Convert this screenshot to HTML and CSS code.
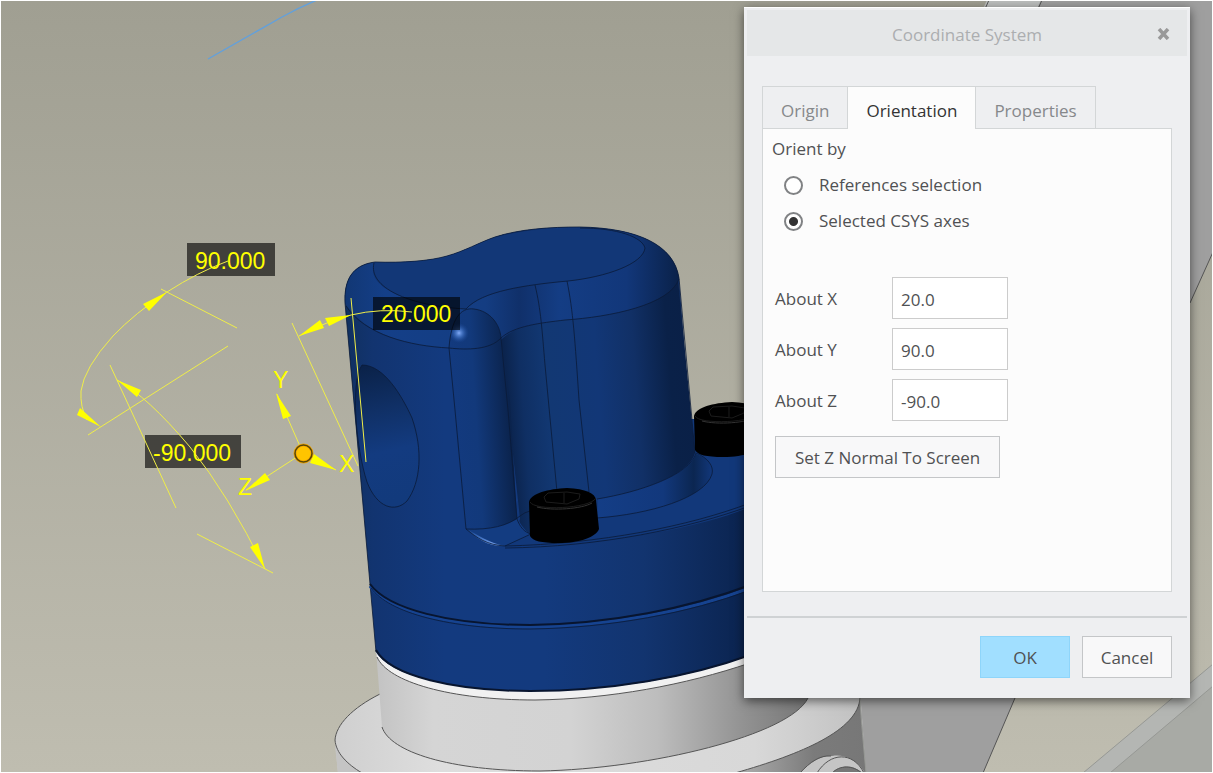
FILE: index.html
```
<!DOCTYPE html>
<html lang="en">
<head>
  <meta charset="UTF-8">
  <meta name="viewport" content="width=device-width, initial-scale=1.0">
  <title>Coordinate System</title>
  <link rel="stylesheet" href="styles.css">
</head>
<body>
  <main class="viewport">
    <svg class="scene" viewBox="1 1 1211 771" preserveAspectRatio="xMidYMid slice" role="img" aria-label="3D model">
      <defs>
        <linearGradient id="body" gradientUnits="userSpaceOnUse" x1="345" y1="0" x2="744" y2="0">
          <stop offset="0" stop-color="#10305f"/>
          <stop offset=".07" stop-color="#123470"/>
          <stop offset=".25" stop-color="#133a7f"/>
          <stop offset=".5" stop-color="#133a7e"/>
          <stop offset=".75" stop-color="#12346f"/>
          <stop offset="1" stop-color="#0b2450"/>
        </linearGradient>
        <linearGradient id="column" gradientUnits="userSpaceOnUse" x1="500" y1="350" x2="690" y2="336">
          <stop offset="0" stop-color="#0a2148"/>
          <stop offset=".1" stop-color="#0f2f63"/>
          <stop offset=".24" stop-color="#123873"/>
          <stop offset=".5" stop-color="#123777"/>
          <stop offset=".7" stop-color="#113066"/>
          <stop offset=".88" stop-color="#0a2148"/>
          <stop offset="1" stop-color="#0a2047"/>
        </linearGradient>
        <linearGradient id="lobe" gradientUnits="userSpaceOnUse" x1="450" y1="400" x2="512" y2="396">
          <stop offset="0" stop-color="#133a7f"/>
          <stop offset=".4" stop-color="#12397b"/>
          <stop offset="1" stop-color="#0a2148"/>
        </linearGradient>
        <linearGradient id="rim" gradientUnits="userSpaceOnUse" x1="345" y1="0" x2="680" y2="0">
          <stop offset="0" stop-color="#123774"/>
          <stop offset=".12" stop-color="#143f88"/>
          <stop offset=".42" stop-color="#143d82"/>
          <stop offset=".52" stop-color="#10306a"/>
          <stop offset=".64" stop-color="#143d84"/>
          <stop offset=".84" stop-color="#12377a"/>
          <stop offset="1" stop-color="#0a2148"/>
        </linearGradient>
        <linearGradient id="hole" x1="0" y1="0" x2=".1" y2="1">
          <stop offset="0" stop-color="#0a2147"/>
          <stop offset=".35" stop-color="#103066"/>
          <stop offset=".65" stop-color="#133b80"/>
          <stop offset="1" stop-color="#123a7c"/>
        </linearGradient>
        <linearGradient id="fillet" gradientUnits="userSpaceOnUse" x1="590" y1="0" x2="712" y2="0">
          <stop offset="0" stop-color="#143e87"/>
          <stop offset=".6" stop-color="#12387c"/>
          <stop offset=".85" stop-color="#0b2651"/>
          <stop offset="1" stop-color="#12377a"/>
        </linearGradient>
        <linearGradient id="glint" gradientUnits="userSpaceOnUse" x1="466" y1="529" x2="506" y2="547">
          <stop offset="0" stop-color="#133c81"/>
          <stop offset=".35" stop-color="#3b6cbc"/>
          <stop offset=".7" stop-color="#6f9be6"/>
          <stop offset="1" stop-color="#1b478f"/>
        </linearGradient>
        <linearGradient id="steel" gradientUnits="userSpaceOnUse" x1="377" y1="0" x2="808" y2="0">
          <stop offset="0" stop-color="#c3c3c3"/>
          <stop offset=".13" stop-color="#d5d5d5"/>
          <stop offset=".45" stop-color="#d3d3d3"/>
          <stop offset=".65" stop-color="#bdbdbd"/>
          <stop offset=".85" stop-color="#929292"/>
          <stop offset="1" stop-color="#777"/>
        </linearGradient>
        <linearGradient id="flange" gradientUnits="userSpaceOnUse" x1="335" y1="0" x2="860" y2="0">
          <stop offset="0" stop-color="#cfcfcf"/>
          <stop offset=".2" stop-color="#dedede"/>
          <stop offset=".8" stop-color="#d8d8d8"/>
          <stop offset="1" stop-color="#c2c2c2"/>
        </linearGradient>
        <linearGradient id="wall" gradientUnits="userSpaceOnUse" x1="735" y1="0" x2="866" y2="0">
          <stop offset="0" stop-color="#b0b0b0"/>
          <stop offset=".6" stop-color="#7b7b7b"/>
          <stop offset="1" stop-color="#777"/>
        </linearGradient>
        <radialGradient id="shine">
          <stop offset="0" stop-color="#82abf8"/>
          <stop offset=".4" stop-color="#4a7ccf" stop-opacity=".7"/>
          <stop offset="1" stop-color="#1b4a9c" stop-opacity="0"/>
        </radialGradient>
      </defs>

      <!-- background planes -->
      <path d="M987 0H1213V252L1190 303L1015 698L983 773H820V690Z" fill="#9f9f9f"/>
      <path d="M987 0H1041L1030 24H976Z" fill="#bdbfbe"/>
      <path d="M1083 773L1213 664V773Z" fill="#b4b6b3"/>
      <path d="M1110 773L1213 686V773Z" fill="#a8aaa5"/>
      <path class="edge-soft" d="M1083 773L1213 664M1110 773L1213 686"/>
      <path class="edge" d="M989 0L985 9M1042 0L1038 9M1213 252L1190 303M1015 698L983 773"/>
      <path class="sketch" d="M208 59L282 17Q298 8 317 0"/>

      <!-- steel base -->
      <path d="M335 740C336 725 352 708 380 694L700 680L860 690L866 773H338Z" fill="url(#flange)"/>
      <path d="M335 746C340 757 349 765 362 773H338Z" fill="#c4c4c4"/>
      <path d="M735 773C802 754 858 730 860 698L866 773Z" fill="url(#wall)"/>
      <path class="edge" d="M380 694C352 708 336 725 335 740C336 753 347 764 362 773M735 773C802 754 858 730 860 698"/>
      <path class="edge-soft" d="M860 698C861 720 864 750 866 773"/>
      <path d="M800 773C810 762 822 755 832 756C848 753 860 764 865 773Z" fill="#c5c5c5"/>
      <path d="M832 773C838 766 852 763 862 773Z" fill="#777"/>
      <path class="edge" d="M800 773C810 762 820 755 831 756M817 773C830 752 853 751 864 773M832 773C840 765 852 765 862 773"/>
      <path d="M376 650L382 727C390 752 450 771 540 771C650 769 790 735 808 698V640Z" fill="url(#steel)"/>
      <path class="edge" d="M382 727C390 752 450 771 540 771C650 769 790 735 808 698"/>
      <path d="M376 648L377 657C388 682 450 700 535 700C610 699 685 685 750 663V645Z" fill="#f1f1f1"/>
      <path class="edge" d="M377 657C388 682 450 700 535 700C610 699 685 685 750 663"/>

      <!-- blue housing -->
      <path d="M345 303C344 280 352 265 375 262C402 263 430 261 447 256C465 251 478 243 495 237C520 229 550 227 580 227C638 228 674 245 679 278L690 419H750V655C690 678 610 691 530 691C455 691 390 676 376 652L370 584Z" fill="url(#body)"/>
      <path d="M692 419H750V507C700 528 610 545 505 547L466 529L520 500L600 500Z" fill="#12387a"/>
      <path d="M500 335C520 320 630 318 678 280L695 453C690 475 640 492 598 499L560 540C530 540 516 526 520 519Z" fill="url(#column)"/>
      <path d="M345 303C344 280 352 265 375 262C402 263 430 261 447 256C465 251 478 243 495 237C520 229 550 227 580 227C638 228 674 245 679 278C670 305 610 317 565 320C540 323 514 326 501 340C490 350 467 350 449 348C410 346 365 335 345 303Z" fill="url(#rim)"/>
      <path d="M374 263C402 263 430 262 447 257C465 252 478 244 495 238C520 230 550 228 580 228C618 228 642 237 645 248C643 264 606 277 568 281C525 285 482 291 466 309C440 308 376 297 373 272Z" fill="#123777"/>
      <path d="M449 348C451 320 460 307 474 309C490 311 500 324 501 338L510 400L517 519C502 528 480 530 466 529L455 410Z" fill="url(#lobe)"/>
      <path d="M466 529C486 530 505 526 518 519C522 528 530 534 530 535L505 547C486 545 476 537 466 529Z" fill="#133c81"/>
      <path d="M466 529C477 534 488 543 505 546C487 547 477 538 466 529Z" fill="url(#glint)"/>
      <path d="M598 499C640 492 690 475 696 454C708 458 714 466 712 474C705 498 650 514 598 518Z" fill="url(#fillet)"/>
      <circle cx="459" cy="333" r="10" fill="url(#shine)"/>
      <path d="M362 365C384 365 402 396 412 418C423 450 421 482 407 501C395 513 377 508 367 482C356 448 350 382 362 365Z" fill="url(#hole)"/>

      <path class="edge-blue" d="M345 303C344 280 352 265 375 262C402 263 430 261 447 256C465 251 478 243 495 237C520 229 550 227 580 227C638 228 674 245 679 278L695 453"/>
      <path class="edge-blue" d="M345 303L356 425L370 584L376 652"/>
      <path class="edge-blue" d="M374 263C368 287 408 306 466 309C482 291 525 285 568 281C606 277 643 264 645 248C642 237 618 228 580 228"/>
      <path class="edge-blue" d="M346 306C365 335 410 346 449 348C467 350 490 350 501 338C514 326 540 323 565 320C610 317 670 305 679 279"/>
      <path class="edge-blue" d="M449 348C451 320 460 307 474 309C490 311 500 324 501 338L508 410L517 519C520 527 524 532 531 534M449 348L455 410L466 529"/>
      <path class="edge-blue" d="M535 285C541 310 542 330 545 365L557 492M567 281C573 310 575 340 579 400L589 492"/>
      <path class="edge-blue" d="M362 365C384 365 402 396 412 418C423 450 421 482 407 501C395 513 377 508 367 482C356 448 350 382 362 365Z"/>
      <path class="edge-blue" d="M466 529C490 530 508 526 520 516Q525 512 530 511M466 529C477 538 487 545 505 546L531 534M505 548C600 547 690 528 750 506M505 546C600 544 690 526 750 503"/>
      <path class="edge-blue" d="M597 499C640 492 690 475 696 453C708 458 714 466 712 474C705 498 650 514 597 518"/>
      <path d="M370 586C388 611 450 627 530 627C610 626 690 611 750 588" fill="none" stroke="#164390" stroke-width="3"/>
      <path class="edge-bold" d="M370 584C388 609 450 625 530 625C610 624 690 608 750 585"/>
      <path class="edge-blue" d="M371 588C389 613 450 629 530 629C610 628 690 613 750 590"/>
      <path class="edge-bold" d="M376 650C390 676 455 691 530 691C610 691 690 677 750 655"/>

      <!-- cap screws -->
      <g id="screw">
        <path d="M529 502C531 493 548 489 567 488C586 489 595 493 596 500L599 529C596 537 580 543 558 543C541 543 533 541 530 536Z"/>
        <path class="screw-edge" d="M530 502C534 511 590 509 596 498M544 497L548 493L567 492L580 494L579 499L567 504L546 502ZM564 493V503"/>
        <path d="M537 507C552 511 582 509 592 503" fill="none" stroke="#333"/>
      </g>
      <use href="#screw" x="165" y="-86"/>

      <!-- angle dimensions -->
      <g class="tag">
        <rect x="187" y="243" width="88" height="33"/>
        <rect x="145" y="435" width="96" height="33"/>
        <rect x="373" y="297" width="87" height="33"/>
      </g>
      <g class="dim">
        <path d="M228 261Q198 272 167 292Q135 313 113 336Q84 368 81 391Q80 407 87 420"/>
        <path d="M161 289L237 328M228 346L88 435M110 365L176 508M197 534L273 573"/>
        <path d="M117 380Q147 396 190 447Q228 494 265 569"/>
        <path d="M292 323L358 466M299 336Q325 322 351 315Q380 308 412 312M351 298L366 462"/>
        <path d="M303 453L277 394M303 453L246 490M303 453L336 470"/>
      </g>
      <g class="arrow">
        <path d="M167 292L143 304L149 311ZM101 427L80 408L77 415ZM117 380L141 390L137 397ZM265 569L250 547L258 543ZM299 336L320 320L324 328ZM351 315L325 318L329 326ZM276 393L283 419L291 416ZM245 491L265 473L270 480ZM336 470L310 463L314 454Z"/>
      </g>
      <circle cx="303.5" cy="453.5" r="8.5" fill="#ffc400" stroke="#f2a500" stroke-width="3"/>
      <circle cx="303.5" cy="453.5" r="8.5" fill="none" stroke="#55460a" stroke-width="1.5"/>
      <g class="dim-text">
        <text x="195" y="269">90.000</text>
        <text x="153" y="461">-90.000</text>
        <text x="381" y="322">20.000</text>
        <text x="273" y="388">Y</text>
        <text x="339" y="472">X</text>
        <text x="238" y="495">Z</text>
      </g>
    </svg>

    <form class="dialog" role="dialog" aria-labelledby="dialogTitle">
      <header class="dialog-header">
        <h1 id="dialogTitle">Coordinate System</h1>
        <button type="button" class="close" aria-label="Close">
          <svg width="13" height="12" viewBox="0 0 13 12"><path d="M2 1L11 11M11 1L2 11" stroke="#999" stroke-width="3.5"/></svg>
        </button>
      </header>

      <div class="dialog-body">
        <div class="tabs" role="tablist">
          <button type="button" class="tab" role="tab">Origin</button>
          <button type="button" class="tab active" role="tab" aria-selected="true">Orientation</button>
          <button type="button" class="tab" role="tab">Properties</button>
        </div>
        <div class="panel" role="tabpanel">
          <fieldset class="orient">
            <legend>Orient by</legend>
            <label class="radio"><input type="radio" name="orient">References selection</label>
            <label class="radio"><input type="radio" name="orient" checked>Selected CSYS axes</label>
          </fieldset>
          <div class="angles">
            <label for="aboutX">About X</label>
            <input id="aboutX" type="text" value="20.0">
            <label for="aboutY">About Y</label>
            <input id="aboutY" type="text" value="90.0">
            <label for="aboutZ">About Z</label>
            <input id="aboutZ" type="text" value="-90.0">
          </div>
          <button type="button" class="btn">Set Z Normal To Screen</button>
        </div>
      </div>

      <footer class="dialog-footer">
        <button type="submit" class="btn primary">OK</button>
        <button type="button" class="btn">Cancel</button>
      </footer>
    </form>
  </main>
</body>
</html>
```
FILE: styles.css
```
:root {
  --text: #505153;
  --muted: #86888b;
  --line: #d3d6d7;
  --dialog-bg: #eeeff1;
}
* { box-sizing: border-box; }
body {
  margin: 0;
  font-family: "Segoe UI", "Open Sans", "Noto Sans", sans-serif;
  font-size: 17px;
  line-height: 24px;
  color: var(--text);
}
button, input { font: inherit; color: inherit; }

.viewport {
  position: relative;
  height: 100vh;
  min-height: 720px;
  overflow: hidden;
  border: 1px solid #fff;
  background: linear-gradient(#a09f92, #bfbdb0);
}
.scene { display: block; width: 100%; height: 100%; }

.edge, .edge-soft, .edge-blue, .edge-bold, .sketch, .screw-edge, .dim path { fill: none; stroke-width: 1; }
.edge { stroke: #555; }
.edge-soft { stroke: #969894; }
.edge-blue { stroke: #0a1a38; stroke-opacity: 0.8; }
.edge-bold { stroke: #08152f; stroke-width: 2; }
.sketch { stroke: #62a0dc; stroke-width: 1.4; }
.screw-edge { stroke: #1c1c1c; }
.tag { fill: #000; fill-opacity: 0.62; }
.dim path { stroke: #f0ee48; }
.arrow { fill: #ff0; }
.dim-text {
  fill: #ff0;
  font-family: "Liberation Sans", Arial, sans-serif;
  font-size: 23px;
}

/* floating dialog */
.dialog {
  position: absolute;
  top: 6px; right: 22px;
  width: 446px;
  padding: 2px 3px;
  background: var(--dialog-bg);
  border-top: 1px solid #fff;
  box-shadow: 0 3px 10px rgba(0,0,0,0.55);
}
.dialog-header {
  display: grid;
  grid-template-columns: 48px 1fr 48px;
  align-items: center;
  height: 46px;
  background: #e5e7e8;
}
.dialog-header h1 {
  grid-column: 2;
  margin: 0;
  padding-top: 4px;
  font-size: 17px; font-weight: normal;
  text-align: center;
  color: #acaeb0;
}
.close {
  display: flex; justify-content: center; align-items: center;
  height: 46px; padding: 2px 0 0;
  border: none; background: none;
  cursor: pointer;
}

.dialog-body { padding: 30px 15px 24px; }
.tabs { display: flex; }
.tab {
  height: 42px; padding: 6px 18px 0;
  border: 1px solid var(--line); border-bottom: none; border-right: none;
  background: var(--dialog-bg);
  color: var(--muted);
  cursor: pointer;
}
.tab:last-child { border-right: 1px solid var(--line); }
.tab.active {
  position: relative;
  height: 43px; margin-bottom: -1px;
  background: #fcfcfc;
  color: #333;
}
.panel {
  min-height: 464px; padding: 8px 12px;
  border: 1px solid var(--line);
  background: #fcfcfc;
}
.orient { margin: 0 0 44px; padding: 0; border: none; }
.orient legend { margin-left: -3px; padding: 0; }
.radio { display: flex; align-items: center; gap: 16px; height: 24px; margin: 12px 0 0 9px; }
.radio input {
  appearance: none;
  width: 19px; height: 19px; margin: 0;
  border: 2px solid #808284; border-radius: 50%;
  background: #fff;
}
.radio input:checked { background: radial-gradient(circle, #333 0 4px, #fff 5px); }
.angles {
  display: grid;
  grid-template-columns: 117px 116px;
  align-items: center;
  gap: 9px 0;
  margin-bottom: 15px;
}
.angles label { padding-top: 2px; }
.angles input {
  width: 100%; height: 42px; padding: 2px 8px 0;
  border: 1px solid #ccc;
  background: #fff;
}
.btn {
  height: 42px; padding: 2px 19px 0;
  border: 1px solid #c4c6c8;
  background: #f8f8f9;
  cursor: pointer;
}
.dialog-footer {
  display: flex; justify-content: flex-end; gap: 12px;
  padding: 18px 15px;
  border-top: 2px solid #cfd2d4;
}
.dialog-footer .btn { min-width: 90px; padding: 2px 0 0; }
.btn.primary { border-color: #8ed5fa; background: #a1dfff; }
```
